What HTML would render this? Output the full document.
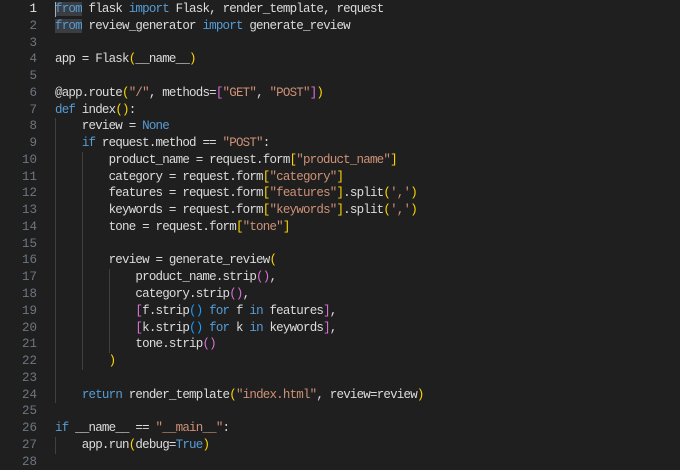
<!DOCTYPE html>
<html><head><meta charset="utf-8"><style>
html,body{margin:0;padding:0;background:#1f1f1f;width:680px;height:463px;overflow:hidden}
.ed{position:absolute;top:1px;left:0;font-family:"Liberation Mono",monospace;font-size:12.5px;letter-spacing:-0.8px;color:#dcdcdc}
.l{height:16.77px;line-height:16.77px;white-space:pre;position:relative}
.n{position:absolute;left:0;width:37px;text-align:right;color:#6e7681;letter-spacing:0}
.n.a{color:#e6e6e6}
.c{position:absolute;left:55px}
.k{color:#569cd6}.s{color:#ce9178}.y{color:#ffd700}.p{color:#da70d6}.b{color:#179fff}
.g{position:absolute;width:1px;background:#404040}
.hl{background:#3a3d41}
.cur{position:absolute;left:55px;top:1px;width:1px;height:15px;background:#aeafad}
</style></head><body>
<div class="g" style="left:55px;top:118px;height:285px"></div>
<div class="g" style="left:82px;top:152px;height:218px"></div>
<div class="g" style="left:109px;top:269px;height:84px"></div>
<div class="g" style="left:55px;top:437px;height:17px"></div>
<div class="ed">
<div class="l"><span class="n a">1</span><span class="c"><span class="k hl">from</span> flask <span class="k">import</span> Flask, render_template, request</span><span class="cur"></span></div>
<div class="l"><span class="n">2</span><span class="c"><span class="k hl">from</span> review_generator <span class="k">import</span> generate_review</span></div>
<div class="l"><span class="n">3</span></div>
<div class="l"><span class="n">4</span><span class="c">app = Flask<span class="y">(</span>__name__<span class="y">)</span></span></div>
<div class="l"><span class="n">5</span></div>
<div class="l"><span class="n">6</span><span class="c">@app.route<span class="y">(</span><span class="s">"/"</span>, methods=<span class="p">[</span><span class="s">"GET"</span>, <span class="s">"POST"</span><span class="p">]</span><span class="y">)</span></span></div>
<div class="l"><span class="n">7</span><span class="c"><span class="k">def</span> index<span class="y">()</span>:</span></div>
<div class="l"><span class="n">8</span><span class="c">    review = <span class="k">None</span></span></div>
<div class="l"><span class="n">9</span><span class="c">    <span class="k">if</span> request.method == <span class="s">"POST"</span>:</span></div>
<div class="l"><span class="n">10</span><span class="c">        product_name = request.form<span class="y">[</span><span class="s">"product_name"</span><span class="y">]</span></span></div>
<div class="l"><span class="n">11</span><span class="c">        category = request.form<span class="y">[</span><span class="s">"category"</span><span class="y">]</span></span></div>
<div class="l"><span class="n">12</span><span class="c">        features = request.form<span class="y">[</span><span class="s">"features"</span><span class="y">]</span>.split<span class="y">(</span><span class="s">','</span><span class="y">)</span></span></div>
<div class="l"><span class="n">13</span><span class="c">        keywords = request.form<span class="y">[</span><span class="s">"keywords"</span><span class="y">]</span>.split<span class="y">(</span><span class="s">','</span><span class="y">)</span></span></div>
<div class="l"><span class="n">14</span><span class="c">        tone = request.form<span class="y">[</span><span class="s">"tone"</span><span class="y">]</span></span></div>
<div class="l"><span class="n">15</span></div>
<div class="l"><span class="n">16</span><span class="c">        review = generate_review<span class="y">(</span></span></div>
<div class="l"><span class="n">17</span><span class="c">            product_name.strip<span class="p">()</span>,</span></div>
<div class="l"><span class="n">18</span><span class="c">            category.strip<span class="p">()</span>,</span></div>
<div class="l"><span class="n">19</span><span class="c">            <span class="p">[</span>f.strip<span class="b">()</span> <span class="k">for</span> f <span class="k">in</span> features<span class="p">]</span>,</span></div>
<div class="l"><span class="n">20</span><span class="c">            <span class="p">[</span>k.strip<span class="b">()</span> <span class="k">for</span> k <span class="k">in</span> keywords<span class="p">]</span>,</span></div>
<div class="l"><span class="n">21</span><span class="c">            tone.strip<span class="p">()</span></span></div>
<div class="l"><span class="n">22</span><span class="c">        <span class="y">)</span></span></div>
<div class="l"><span class="n">23</span></div>
<div class="l"><span class="n">24</span><span class="c">    <span class="k">return</span> render_template<span class="y">(</span><span class="s">"index.html"</span>, review=review<span class="y">)</span></span></div>
<div class="l"><span class="n">25</span></div>
<div class="l"><span class="n">26</span><span class="c"><span class="k">if</span> __name__ == <span class="s">"__main__"</span>:</span></div>
<div class="l"><span class="n">27</span><span class="c">    app.run<span class="y">(</span>debug=<span class="k">True</span><span class="y">)</span></span></div>
<div class="l"><span class="n">28</span></div>
</div>
</body></html>
